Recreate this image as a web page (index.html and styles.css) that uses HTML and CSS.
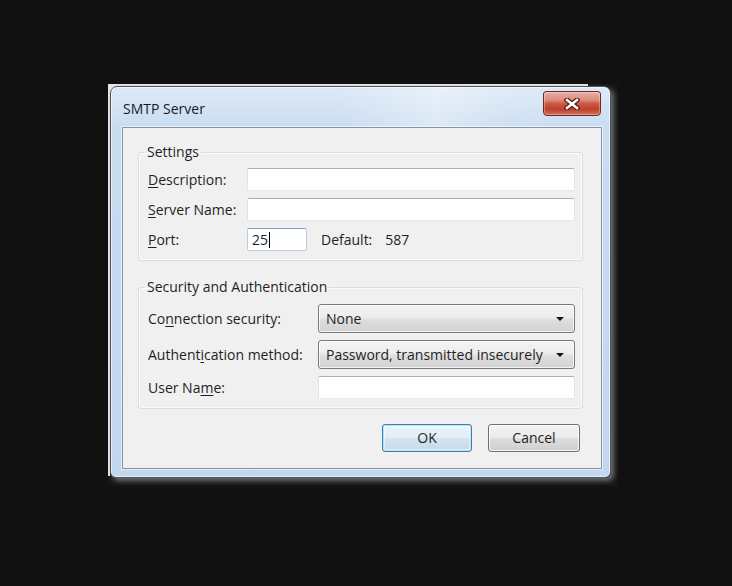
FILE: index.html
```html
<!DOCTYPE html>
<html lang="en">
<head>
<meta charset="utf-8">
<title>SMTP Server</title>
<link rel="stylesheet" href="styles.css">
</head>
<body>
<div class="stage">
  <div class="shot">
    <div class="window">
      <div class="titlebar">
        <span class="title">SMTP Server</span>
        <div class="close" aria-label="Close">
          <svg width="16" height="12" viewBox="0 0 16 12">
            <path d="M3 2 L13 10 M13 2 L3 10" stroke="#4e1c14" stroke-width="5" stroke-linecap="square" fill="none"/>
            <path d="M3 2 L13 10 M13 2 L3 10" stroke="#ffffff" stroke-width="2.6" stroke-linecap="square" fill="none"/>
          </svg>
        </div>
      </div>
      <div class="client">
        <fieldset class="group group-settings">
          <legend>Settings</legend>
          <div class="form form-settings">
            <label class="lbl"><u>D</u>escription:</label>
            <div class="textbox"></div>
            <label class="lbl"><u>S</u>erver Name:</label>
            <div class="textbox"></div>
            <label class="lbl"><u>P</u>ort:</label>
            <div class="port-row">
              <div class="textbox port focused"><span>25</span><span class="caret"></span></div>
              <span class="default-label">Default:</span>
              <span class="default-val">587</span>
            </div>
          </div>
        </fieldset>
        <fieldset class="group group-security">
          <legend>Security and Authentication</legend>
          <div class="form form-security">
            <label class="lbl">Co<u>n</u>nection security:</label>
            <div class="combo"><span>None</span><span class="arrow"></span></div>
            <label class="lbl">Authent<u>i</u>cation method:</label>
            <div class="combo"><span>Password, transmitted insecurely</span><span class="arrow"></span></div>
            <label class="lbl">User Na<u>m</u>e:</label>
            <div class="textbox"></div>
          </div>
        </fieldset>
        <div class="buttons">
          <button class="btn btn-default">OK</button>
          <button class="btn btn-cancel">Cancel</button>
        </div>
      </div>
    </div>
  </div>
</div>
</body>
</html>
```
FILE: styles.css
```css
html, body {
  margin: 0;
  padding: 0;
  background: #111111;
}

body {
  font-family: "Open Sans", "Noto Sans", sans-serif;
  font-size: 14px;
  color: #1f1f1f;
}

.stage {
  padding: 84px 0 0 108px;
}

.shot {
  width: 510px;
  height: 402px;
  box-sizing: border-box;
  padding: 2px 0 0 2px;
  background:
    linear-gradient(#e6e6e6, #e6e6e6) 0 0 / 2px 392px no-repeat,
    linear-gradient(#e6e6e6, #e6e6e6) 0 0 / 12px 12px no-repeat,
    linear-gradient(#e6e6e6, #e6e6e6) 0 0 / 480px 2px no-repeat,
    #161616;
}

.window {
  width: 501px;
  height: 392px;
  box-sizing: border-box;
  border: 1px solid #4d5560;
  border-radius: 7px 7px 6px 6px;
  background:
    linear-gradient(100deg, rgba(255,255,255,0) 45%, rgba(255,255,255,0.35) 65%, rgba(255,255,255,0.1) 80%, rgba(255,255,255,0) 95%) 0 0 / 100% 40px no-repeat,
    linear-gradient(180deg, #dde9f6 0px, #d3e3f4 20px, #c9dcf0 40px, #c2d7ee 100%);
  box-shadow: inset 0 0 0 1px rgba(255,255,255,0.55), 3px 3px 5px 0 #6e6e6e;
  display: flex;
  flex-direction: column;
}

.titlebar {
  height: 40px;
  display: flex;
  align-items: flex-start;
  justify-content: space-between;
  flex: none;
}

.title {
  margin: 13px 0 0 12px;
  line-height: 18px;
  font-size: 14px;
  color: #1a1a1a;
}

.close {
  margin: 4px 9px 0 0;
  width: 58px;
  height: 25px;
  box-sizing: border-box;
  border: 1px solid #6e2a22;
  border-radius: 3px 3px 4px 4px;
  background: linear-gradient(180deg, #e9b0a4 0%, #dc8c7c 35%, #cc5a44 50%, #c0402c 75%, #d2705a 100%);
  box-shadow: inset 0 0 0 1px rgba(255,255,255,0.3);
  display: flex;
  align-items: center;
  justify-content: center;
}

.close svg {
  display: block;
}

.client {
  flex: 1;
  margin: 0 8px 8px 11px;
  border: 1px solid #8393a8;
  box-shadow: 0 0 0 1px rgba(255,255,255,0.6);
  background: #f0f0f0;
  display: flex;
  flex-direction: column;
  align-items: flex-start;
}

.group {
  margin: 0 0 0 15px;
  width: 445px;
  box-sizing: border-box;
  border: 1px solid #d5dfe5;
  border-radius: 3px;
  box-shadow: inset 0 0 0 1px #fbfbfb;
  padding: 7px 7px 8px 9px;
  min-width: 0;
}

.group legend {
  padding: 0 2px;
  margin-left: -3px;
  line-height: 18px;
  color: #1f1f1f;
}

.group-settings {
  margin-top: 15px;
  padding-bottom: 9px;
}

.group-security {
  margin-top: 17px;
  padding-top: 8px;
  padding-bottom: 9px;
}

.form {
  display: grid;
  align-items: center;
  row-gap: 7px;
}

.form-settings {
  grid-template-columns: 99px 328px;
  grid-auto-rows: 23px;
}

.form-security {
  grid-template-columns: 170px 257px;
  grid-template-rows: 29px 29px 23px;
}

.lbl {
  line-height: 18px;
  white-space: nowrap;
}

.lbl u {
  text-underline-offset: 2px;
}

.textbox {
  height: 23px;
  box-sizing: border-box;
  background: #ffffff;
  border: 1px solid #e2e3ea;
  border-top-color: #abadb3;
  border-bottom-color: #e3e9ef;
  border-radius: 2px;
}

.port-row {
  display: flex;
  align-items: center;
  height: 23px;
}

.port {
  width: 60px;
  display: flex;
  align-items: center;
  padding-left: 4px;
  line-height: 18px;
}

.focused {
  border-color: #b5cde6;
  border-top-color: #7d9ec4;
}

.caret {
  width: 1px;
  height: 16px;
  background: #000;
  margin-left: 1px;
}

.default-label {
  margin-left: 14px;
  line-height: 18px;
}

.default-val {
  margin-left: 13px;
  line-height: 18px;
}

.combo {
  height: 29px;
  box-sizing: border-box;
  border: 1px solid #7a7a7a;
  border-radius: 3px;
  background: linear-gradient(180deg, #f4f4f4 0%, #ececec 48%, #dfdfdf 52%, #d2d2d2 100%);
  box-shadow: inset 0 0 0 1px rgba(255,255,255,0.75);
  display: flex;
  align-items: center;
  justify-content: space-between;
  padding: 0 10px 0 7px;
  line-height: 18px;
  white-space: nowrap;
}

.arrow {
  width: 0;
  height: 0;
  border-left: 4px solid transparent;
  border-right: 4px solid transparent;
  border-top: 4px solid #111;
  margin-top: 1px;
}

.buttons {
  align-self: stretch;
  margin: 15px 21px 0 0;
  display: flex;
  justify-content: flex-end;
  gap: 16px;
}

.btn {
  height: 28px;
  box-sizing: border-box;
  font-family: "Open Sans", "Noto Sans", sans-serif;
  font-size: 14px;
  color: #1f1f1f;
  border: 1px solid #707070;
  border-radius: 3px;
  background: linear-gradient(180deg, #f3f3f3 0%, #ebebeb 48%, #dddddd 52%, #cfcfcf 100%);
  box-shadow: inset 0 0 0 1px rgba(255,255,255,0.75);
  padding: 0;
  line-height: 18px;
}

.btn-default {
  width: 90px;
  border-color: #3c7fb1;
  background: linear-gradient(180deg, #eaf5fb 0%, #e1eef6 48%, #d3e4ee 52%, #c6d9e6 100%);
  box-shadow: inset 0 0 0 1px #b4e2f6, inset 0 0 0 2px rgba(255,255,255,0.5);
}

.btn-cancel {
  width: 92px;
}
```
